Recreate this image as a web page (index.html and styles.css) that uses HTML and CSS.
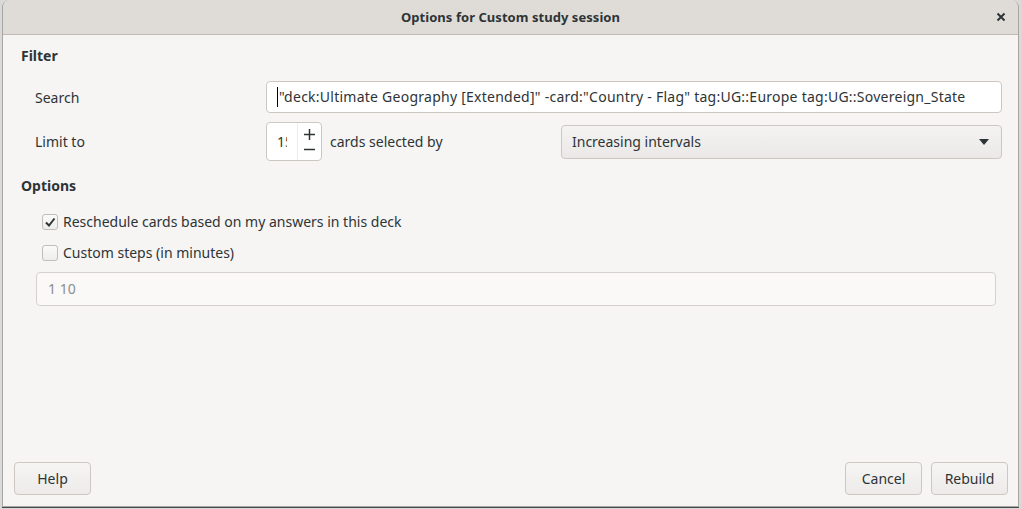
FILE: index.html
```html
<!DOCTYPE html>
<html lang="en">
<head>
    <meta charset="UTF-8">
    <title>Options for Custom study session</title>
    <link rel="stylesheet" href="styles.css">
</head>
<body>

<div class="dialog">
    <!-- Title bar -->
    <div class="titlebar">
        <span class="title">Options for Custom study session</span>
        <span class="close">
            <svg width="10" height="10" viewBox="0 0 10 10"><path d="M1.5 1.5 L8.5 8.5 M8.5 1.5 L1.5 8.5" stroke="#2e3436" stroke-width="2"/></svg>
        </span>
    </div>

    <div class="content">
        <h3 class="section">Filter</h3>

        <div class="row search-row">
            <label class="row-label">Search</label>
            <div class="entry">
                <span class="caret"></span>"deck:Ultimate Geography [Extended]" -card:"Country - Flag" tag:UG::Europe tag:UG::Sovereign_State
            </div>
        </div>

        <div class="row limit-row">
            <label class="row-label">Limit to</label>
            <div class="spin">
                <span class="spin-value">15</span>
                <span class="spin-buttons">
                    <svg width="11" height="11" viewBox="0 0 11 11"><path d="M0 5.5 H11 M5.5 0 V11" stroke="#2e3436" stroke-width="1.5"/></svg>
                    <svg width="11" height="11" viewBox="0 0 11 11"><path d="M0 5.5 H11" stroke="#2e3436" stroke-width="1.5"/></svg>
                </span>
            </div>
            <span class="selected-by">cards selected by</span>
            <div class="combo">
                <span>Increasing intervals</span>
                <svg width="12" height="8" viewBox="0 0 12 8"><path d="M1 1 H11 L6 7 Z" fill="#2e3436"/></svg>
            </div>
        </div>

        <h3 class="section options-title">Options</h3>

        <div class="check-row first">
            <span class="checkbox">
                <svg width="12" height="12" viewBox="0 0 12 12"><path d="M2 6.5 L5 9.5 L10.5 2.5" stroke="#2e3436" stroke-width="2" fill="none"/></svg>
            </span>
            Reschedule cards based on my answers in this deck
        </div>
        <div class="check-row">
            <span class="checkbox"></span>
            Custom steps (in minutes)
        </div>

        <div class="steps-entry">1 10</div>
    </div>

    <div class="footer">
        <button class="btn">Help</button>
        <div class="footer-right">
            <button class="btn">Cancel</button>
            <button class="btn">Rebuild</button>
        </div>
    </div>
</div>

</body>
</html>
```

FILE: styles.css
```css
body {
    margin: 0;
    background-color: #d9d9d9;
    font-family: "Noto Sans", sans-serif;
    font-size: 14px;
    color: #2e3436;
    height: 509px;
    overflow: hidden;
}

.dialog {
    width: 1015px;
    height: 506px;
    margin-left: 2px;
    background-color: #f6f5f4;
    border: 1px solid #a8a6a3;
    border-top: none;
    border-radius: 8px 8px 0 0;
    display: flex;
    flex-direction: column;
    box-shadow: 0 1px 0 #4a4a4a;
}

.titlebar {
    height: 34px;
    background-color: #dfdcd8;
    border-bottom: 1px solid #c0bbb5;
    border-radius: 8px 8px 0 0;
    display: flex;
    align-items: center;
    justify-content: center;
    position: relative;
}

.title {
    font-weight: bold;
    font-size: 13px;
    letter-spacing: 0.05px;
}

.close {
    position: absolute;
    right: 12px;
    top: 12px;
    display: flex;
}

.content {
    padding: 11px 16px 0 18px;
    flex: 1;
}

.section {
    margin: 0;
    font-size: 14px;
    font-weight: bold;
    line-height: 20px;
}

.row {
    display: flex;
    align-items: center;
}

.row-label {
    width: 231px;
    padding-left: 14px;
    flex-shrink: 0;
}

.search-row {
    margin-top: 15px;
}

.entry {
    flex: 1;
    height: 30px;
    line-height: 30px;
    background-color: #fff;
    border: 1px solid #cdc7c2;
    border-radius: 4px;
    padding-left: 10px;
    white-space: nowrap;
    overflow: hidden;
    display: flex;
    align-items: center;
    letter-spacing: 0.25px;
}

.caret {
    width: 1px;
    height: 20px;
    background-color: #000;
    margin-right: 1px;
}

.limit-row {
    margin-top: 9px;
}

.spin {
    width: 54px;
    height: 37px;
    background-color: #fff;
    border: 1px solid #cdc7c2;
    border-radius: 4px;
    display: flex;
    flex-shrink: 0;
}

.spin-value {
    width: 10px;
    margin: 0 10px;
    overflow: hidden;
    line-height: 37px;
    white-space: nowrap;
    flex-shrink: 0;
}

.spin-buttons {
    border-left: 1px solid #eeebe8;
    flex: 1;
    display: flex;
    flex-direction: column;
    align-items: center;
    justify-content: space-between;
    padding: 6px 0 5px;
}

.selected-by {
    margin-left: 8px;
    width: 231px;
    flex-shrink: 0;
}

.combo {
    flex: 1;
    height: 32px;
    border: 1px solid #cdc7c2;
    border-radius: 4px;
    background: linear-gradient(#f4f3f2, #ebe9e7);
    display: flex;
    align-items: center;
    justify-content: space-between;
    padding: 0 11px 0 10px;
}

.options-title {
    margin-top: 15px;
}

.check-row {
    display: flex;
    align-items: center;
    line-height: 20px;
    margin-top: 11px;
    padding-left: 21px;
}

.check-row.first {
    margin-top: 16px;
}

.checkbox {
    width: 14px;
    height: 14px;
    border: 1px solid #c2bdb7;
    border-radius: 3px;
    background: linear-gradient(#fafafa, #ededeb);
    margin-right: 5px;
    display: flex;
    align-items: center;
    justify-content: center;
}

.steps-entry {
    margin: 9px 6px 0 15px;
    height: 32px;
    line-height: 32px;
    border: 1px solid #d5d1cd;
    border-radius: 4px;
    background-color: #faf9f8;
    color: #8b8e8f;
    padding-left: 11px;
}

.footer {
    display: flex;
    justify-content: space-between;
    padding: 0 10px 11px 11px;
}

.footer-right {
    display: flex;
    gap: 9px;
}

.btn {
    width: 77px;
    height: 33px;
    font-family: "Noto Sans", sans-serif;
    font-size: 14px;
    color: #2e3436;
    border: 1px solid #cdc7c2;
    border-radius: 4px;
    background: linear-gradient(#f6f5f4, #edebe9);
}
```
